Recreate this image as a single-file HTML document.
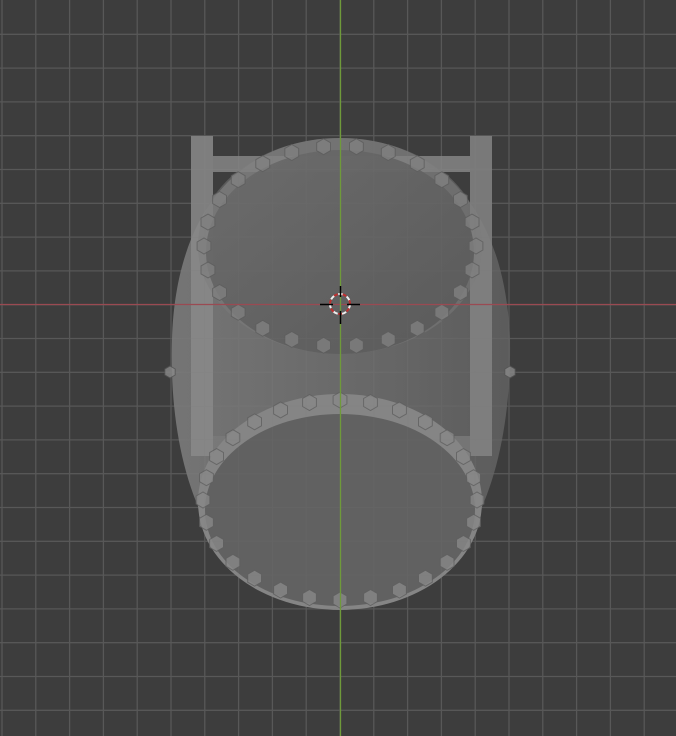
<!DOCTYPE html>
<html><head><style>
html,body{margin:0;padding:0;background:#3d3d3d;width:676px;height:736px;overflow:hidden}
svg{display:block}
</style></head><body>
<svg id="s" width="676" height="736" viewBox="0 0 676 736" xmlns="http://www.w3.org/2000/svg">
<defs>
<linearGradient id="body" x1="0" x2="1" y1="0" y2="0">
<stop offset="0" stop-color="#7c7c7c"/><stop offset="0.5" stop-color="#707070"/><stop offset="1" stop-color="#606060"/>
</linearGradient>
<linearGradient id="cav" x1="0" x2="1" y1="0" y2="1">
<stop offset="0" stop-color="#6a6a6a"/><stop offset="1" stop-color="#585858"/>
</linearGradient>
</defs>
<rect width="676" height="736" fill="#3d3d3d"/>
<g id="grid" stroke="#545454" stroke-width="1.3"></g>
<path d="M340 138 C 430 138 505 200 510 340 C 512 470 470 608 340 608 C 210 608 168 470 172 340 C 176 200 250 138 340 138 Z" fill="url(#body)" opacity="0.88"/>
<rect x="191" y="136" width="22" height="320" fill="#8a8a8a" opacity="0.85"/>
<rect x="470" y="136" width="22" height="320" fill="#848484" opacity="0.85"/>
<rect x="213" y="156" width="257" height="16" fill="#8a8a8a" opacity="0.8"/>
<rect x="213" y="436" width="257" height="16" fill="#7a7a7a" opacity="0.8"/>
<ellipse cx="340" cy="246" rx="142" ry="108" fill="#7c7c7c" opacity="0.5"/>
<ellipse cx="340" cy="252" rx="134" ry="102" fill="url(#cav)" opacity="0.9"/>
<ellipse cx="340" cy="502" rx="142" ry="108" fill="#858585"/>
<ellipse cx="340" cy="510" rx="135" ry="96" fill="#616161"/>
<g id="bolts"></g>
<g id="grid2" stroke="#7a7a7a" stroke-width="1" opacity="0.12"></g>
<line x1="0" y1="304.5" x2="676" y2="304.5" stroke="#9a4a52" stroke-width="1.3"/>
<line x1="340.5" y1="0" x2="340.5" y2="736" stroke="#6f9a3a" stroke-width="1.3"/>
<circle cx="340" cy="304" r="10" fill="none" stroke="#eee" stroke-width="2" stroke-dasharray="5 4"/>
<circle cx="340" cy="304" r="10" fill="none" stroke="#c03030" stroke-width="2" stroke-dasharray="4 5" stroke-dashoffset="4.5"/>
<line x1="320" y1="304.5" x2="333" y2="304.5" stroke="#000" stroke-width="1.5"/>
<line x1="347" y1="304.5" x2="360" y2="304.5" stroke="#000" stroke-width="1.5"/>
<line x1="340.5" y1="286" x2="340.5" y2="297" stroke="#000" stroke-width="1.5"/>
<line x1="340.5" y1="311" x2="340.5" y2="324" stroke="#000" stroke-width="1.5"/>
</svg>
<script>
var ns="http://www.w3.org/2000/svg";
function grid(id){var g=document.getElementById(id);
for(var k=0;k<22;k++){var x=2+33.8*k;var l=document.createElementNS(ns,'line');l.setAttribute('x1',x);l.setAttribute('x2',x);l.setAttribute('y1',0);l.setAttribute('y2',736);g.appendChild(l);}
for(var k=1;k<23;k++){var y=33.8*k+0.5;var l=document.createElementNS(ns,'line');l.setAttribute('y1',y);l.setAttribute('y2',y);l.setAttribute('x1',0);l.setAttribute('x2',676);g.appendChild(l);}}
grid('grid');grid('grid2');
var b=document.getElementById('bolts');
function hex(cx,cy,r,fill,stroke){var p=[];for(var i=0;i<6;i++){var a=Math.PI/3*i+Math.PI/6;p.push((cx+r*Math.cos(a)).toFixed(1)+','+(cy+r*Math.sin(a)).toFixed(1));}
var h=document.createElementNS(ns,'polygon');h.setAttribute('points',p.join(' '));h.setAttribute('fill',fill);h.setAttribute('stroke',stroke);h.setAttribute('stroke-width','1');h.setAttribute('opacity','0.8');b.appendChild(h);}
function ring(cx,cy,rx,ry,n,fill,stroke){for(var i=0;i<n;i++){var a=2*Math.PI*i/n;hex(cx+rx*Math.cos(a),cy+ry*Math.sin(a),8,fill,stroke);}}
ring(340,246,136,100,26,'#808080','#5e5e5e');
ring(340,500,137,100,28,'#888888','#606060');
hex(170,372,6,'#8a8a8a','#555');hex(510,372,6,'#8a8a8a','#555');
</script>
</body></html>
